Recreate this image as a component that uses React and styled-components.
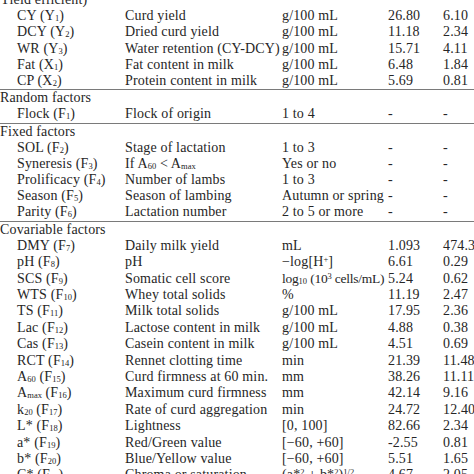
import React from 'react';
import styled, { createGlobalStyle } from 'styled-components';

const GlobalStyle = createGlobalStyle`
    html, body {
        margin: 0;
        padding: 0;
        background: #ffffff;
        overflow: hidden;
    }
`;

const Page = styled.div`
    width: 474px;
    height: 474px;
    overflow: hidden;
    font-family: 'Liberation Serif', 'Times New Roman', serif;
    font-size: 14px;
    letter-spacing: 0.15px;
    color: #262626;
`;

const Table = styled.div`
    display: flex;
    flex-direction: column;
    margin-top: -8px;
`;

const Group = styled.div`
    display: flex;
    flex-direction: column;
    border-bottom: ${props => (props.$last ? 'none' : '1.5px solid #7a7a7a')};
`;

const Row = styled.div`
    display: grid;
    grid-template-columns: 125px 157px 106px 55px 1fr;
    height: ${props => (props.$tall ? '16.4px' : '16.2px')};
    line-height: 16px;
    white-space: nowrap;
`;

const Heading = styled.div`
    grid-column: 1 / -1;
`;

const Label = styled.div`
    grid-column: 1;
    margin-left: 17px;
`;

const Cell = styled.div``;

const Tight = styled.span`
    letter-spacing: -0.25px;
    font-size: 13.5px;
`;

const Sub = styled.sub`
    font-size: 8.5px;
    letter-spacing: 0;
    vertical-align: -1px;
    line-height: 0;
`;

const Sup = styled.sup`
    font-size: 8.5px;
    letter-spacing: 0;
    vertical-align: 4px;
    line-height: 0;
`;

const groups = [
    {
        title: 'Yield efficient)',
        rows: [
            [<>CY (Y<Sub>1</Sub>)</>, 'Curd yield', 'g/100 mL', '26.80', '6.10'],
            [<>DCY (Y<Sub>2</Sub>)</>, 'Dried curd yield', 'g/100 mL', '11.18', '2.34'],
            [<>WR (Y<Sub>3</Sub>)</>, 'Water retention (CY-DCY)', 'g/100 mL', '15.71', '4.11'],
            [<>Fat (X<Sub>1</Sub>)</>, 'Fat content in milk', 'g/100 mL', '6.48', '1.84'],
            [<>CP (X<Sub>2</Sub>)</>, 'Protein content in milk', 'g/100 mL', '5.69', '0.81'],
        ],
    },
    {
        title: 'Random factors',
        rows: [[<>Flock (F<Sub>1</Sub>)</>, 'Flock of origin', '1 to 4', '-', '-']],
    },
    {
        title: 'Fixed factors',
        rows: [
            [<>SOL (F<Sub>2</Sub>)</>, 'Stage of lactation', '1 to 3', '-', '-'],
            [
                <>Syneresis (F<Sub>3</Sub>)</>,
                <>If A<Sub>60</Sub> &lt; A<Sub>max</Sub></>,
                'Yes or no',
                '-',
                '-',
            ],
            [<>Prolificacy (F<Sub>4</Sub>)</>, 'Number of lambs', '1 to 3', '-', '-'],
            [<>Season (F<Sub>5</Sub>)</>, 'Season of lambing', 'Autumn or spring', '-', '-'],
            [<>Parity (F<Sub>6</Sub>)</>, 'Lactation number', '2 to 5 or more', '-', '-'],
        ],
    },
    {
        title: 'Covariable factors',
        last: true,
        rows: [
            [<>DMY (F<Sub>7</Sub>)</>, 'Daily milk yield', 'mL', '1.093', '474.3'],
            [<>pH (F<Sub>8</Sub>)</>, 'pH', <>−log[H<Sup>+</Sup>]</>, '6.61', '0.29'],
            [
                <>SCS (F<Sub>9</Sub>)</>,
                'Somatic cell score',
                <Tight>log<Sub>10</Sub> (10<Sup>3</Sup> cells/mL)</Tight>,
                '5.24',
                '0.62',
            ],
            [<>WTS (F<Sub>10</Sub>)</>, 'Whey total solids', '%', '11.19', '2.47'],
            [<>TS (F<Sub>11</Sub>)</>, 'Milk total solids', 'g/100 mL', '17.95', '2.36'],
            [<>Lac (F<Sub>12</Sub>)</>, 'Lactose content in milk', 'g/100 mL', '4.88', '0.38'],
            [<>Cas (F<Sub>13</Sub>)</>, 'Casein content in milk', 'g/100 mL', '4.51', '0.69'],
            [<>RCT (F<Sub>14</Sub>)</>, 'Rennet clotting time', 'min', '21.39', '11.48'],
            [<>A<Sub>60</Sub> (F<Sub>15</Sub>)</>, 'Curd firmness at 60 min.', 'mm', '38.26', '11.11'],
            [<>A<Sub>max</Sub> (F<Sub>16</Sub>)</>, 'Maximum curd firmness', 'mm', '42.14', '9.16'],
            [<>k<Sub>20</Sub> (F<Sub>17</Sub>)</>, 'Rate of curd aggregation', 'min', '24.72', '12.40'],
            [<>L* (F<Sub>18</Sub>)</>, 'Lightness', '[0, 100]', '82.66', '2.34'],
            [<>a* (F<Sub>19</Sub>)</>, 'Red/Green value', '[−60, +60]', '-2.55', '0.81'],
            [<>b* (F<Sub>20</Sub>)</>, 'Blue/Yellow value', '[−60, +60]', '5.51', '1.65'],
            [
                <>C* (F<Sub>21</Sub>)</>,
                'Chroma or saturation',
                <>(a*<Sup>2</Sup> + b*<Sup>2</Sup>)<Sup>1/2</Sup></>,
                '4.67',
                '2.05',
            ],
        ],
    },
];

const App = () => {
    return (
        <Page>
            <GlobalStyle />
            <Table>
                {groups.map(group => (
                    <Group key={group.title} $last={group.last}>
                        <Row>
                            <Heading>{group.title}</Heading>
                        </Row>
                        {group.rows.map((row, i) => (
                            <Row key={i} $tall={group.last}>
                                <Label>{row[0]}</Label>
                                <Cell>{row[1]}</Cell>
                                <Cell>{row[2]}</Cell>
                                <Cell>{row[3]}</Cell>
                                <Cell>{row[4]}</Cell>
                            </Row>
                        ))}
                    </Group>
                ))}
            </Table>
        </Page>
    );
};

export default App;
